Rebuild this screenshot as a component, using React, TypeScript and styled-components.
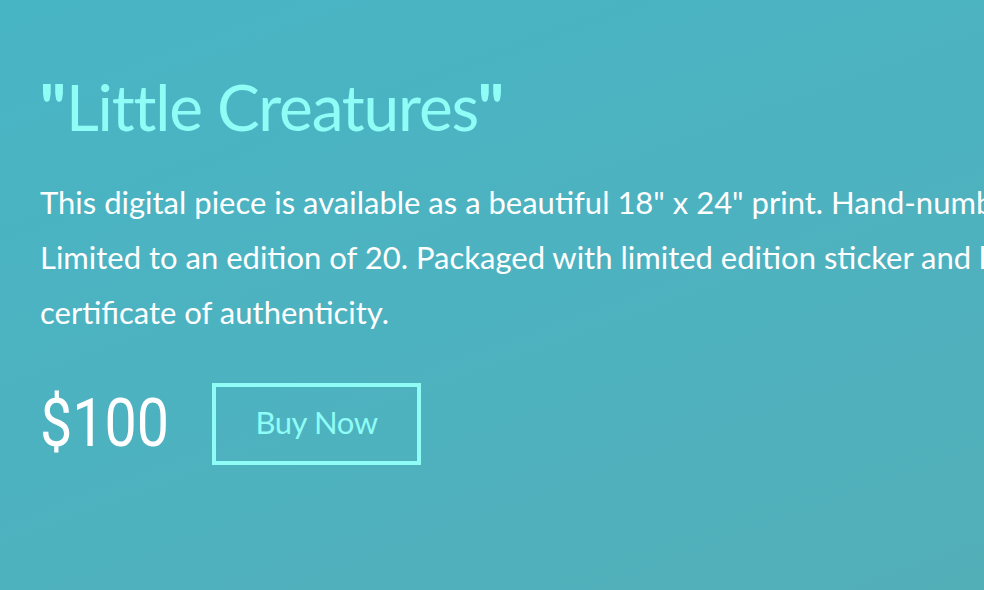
import React from "react";
import styled, { createGlobalStyle } from "styled-components";

const GlobalStyle = createGlobalStyle`
	html, body {
		margin: 0;
		padding: 0;
	}
	body {
		font-family: "Lato", "Open Sans", sans-serif;
		overflow: hidden;
	}
`;

const Page = styled.main`
	width: 984px;
	height: 590px;
	box-sizing: border-box;
	overflow: hidden;
	background: linear-gradient(160deg, #48b5c4 0%, #4db2c0 50%, #52afb8 100%);
	padding: 65px 0 0 40px;
	display: flex;
	flex-direction: column;
`;

const Title = styled.h1`
	margin: 0;
	font-family: "Lato", sans-serif;
	font-weight: 400;
	font-size: 64px;
	line-height: 84px;
	letter-spacing: -1.2px;
	color: #8ffcf6;
	white-space: nowrap;
`;

const Quote = styled.span`
	font-weight: 900;
	letter-spacing: 0;
`;

const Description = styled.p`
	margin: 26px 0 0;
	font-size: 31px;
	line-height: 55px;
	color: #ffffff;
	white-space: nowrap;
`;

const Actions = styled.div`
	margin-top: 43px;
	display: flex;
	align-items: center;
	gap: 42px;
`;

const Price = styled.span`
	width: 130px;
	font-family: "Roboto", "Liberation Sans", sans-serif;
	font-size: 66px;
	line-height: 1;
	color: #ffffff;
	transform: scaleX(0.87);
	transform-origin: left center;
	white-space: nowrap;
`;

const BuyButton = styled.button`
	width: 209px;
	height: 82px;
	box-sizing: border-box;
	padding: 0 0 4px;
	border: 4px solid #8ffcf6;
	background: transparent;
	color: #8ffcf6;
	font-family: "Lato", sans-serif;
	font-size: 31px;
	letter-spacing: -0.4px;
	cursor: pointer;
`;

export default function App() {
	return (
		<>
			<GlobalStyle />
			<Page>
				<Title>
					<Quote>"</Quote>Little Creatures<Quote>"</Quote>
				</Title>
				<Description>
					This digital piece is available as a beautiful 18" x 24" print. Hand-numbered.
					<br />
					Limited to an edition of 20. Packaged with limited edition sticker and hand-signed
					<br />
					certificate of authenticity.
				</Description>
				<Actions>
					<Price>$100</Price>
					<BuyButton>Buy Now</BuyButton>
				</Actions>
			</Page>
		</>
	);
}
